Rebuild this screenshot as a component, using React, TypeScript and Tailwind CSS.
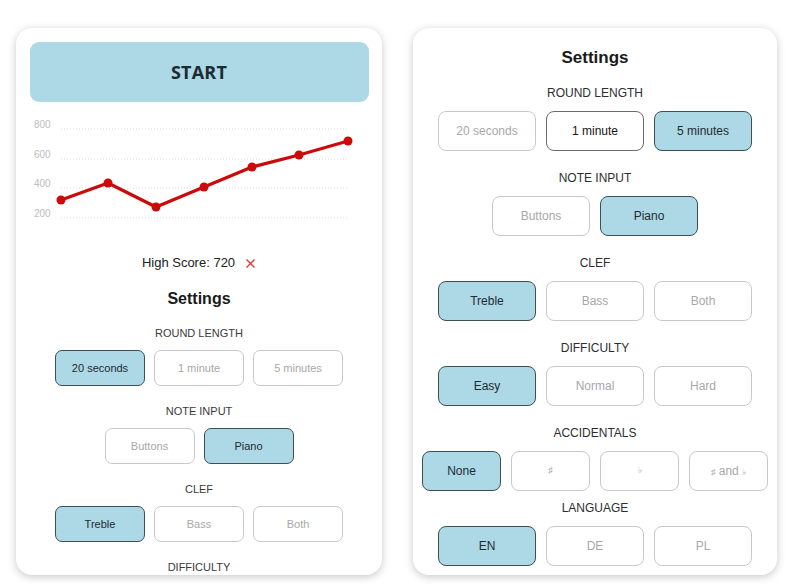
import React from 'react'

type Opt = { label: React.ReactNode; state?: 'on' | 'focus' | 'off' }

const font = { fontFamily: '"Liberation Sans", Arial, sans-serif' }

function OptButton({ opt, small, w }: { opt: Opt; small: boolean; w: string }) {
  const state = opt.state ?? 'off'
  const base = small
    ? 'h-[36px] rounded-[7px] text-[11px]'
    : 'h-[40px] rounded-[8px] text-[12px]'
  const look =
    state === 'on'
      ? 'bg-[#add8e6] border-[#3d4f55] text-[#1d2b30]'
      : state === 'focus'
        ? 'bg-white border-[#6b6b6b] text-[#151515]'
        : 'bg-white border-[#c9c9c9] text-[#a8a8a8]'
  return (
    <div className={`${base} ${w} ${look} flex items-center justify-center border`}>
      {opt.label}
    </div>
  )
}

function Section({
  title,
  opts,
  small,
  w,
  mt,
}: {
  title: string
  opts: Opt[]
  small: boolean
  w?: string
  mt: string
}) {
  return (
    <div className={`flex flex-col items-center ${mt}`}>
      <div
        className={
          small
            ? 'text-[11px] leading-[14px] text-[#3a3a3a]'
            : 'text-[12px] leading-[15px] text-[#2e2e2e]'
        }
      >
        {title}
      </div>
      {opts.length > 0 && (
        <div className={`flex justify-center mt-[10px] ${small ? 'gap-[9px]' : 'gap-[10px]'}`}>
          {opts.map((o, i) => (
            <OptButton key={i} opt={o} small={small} w={w ?? (small ? 'w-[90px]' : 'w-[98px]')} />
          ))}
        </div>
      )}
    </div>
  )
}

const pts: [number, number][] = [
  [31, 88],
  [78, 71],
  [126, 95],
  [174, 75],
  [222, 55],
  [269, 43],
  [318, 29],
]

function Chart() {
  const grid = [
    { y: 17, v: '800' },
    { y: 47, v: '600' },
    { y: 76, v: '400' },
    { y: 106, v: '200' },
  ]
  return (
    <svg width="339" height="120" className="mt-[10px] block" style={font}>
      {grid.map((g) => (
        <g key={g.v}>
          <line x1="31" x2="318" y1={g.y} y2={g.y} stroke="#dcdcdc" strokeWidth="1" strokeDasharray="1 2" />
          <text x="4" y={g.y - 1.5} fontSize="10" fill="#bdbdbd">
            {g.v}
          </text>
        </g>
      ))}
      <polyline
        points={pts.map((p) => p.join(',')).join(' ')}
        fill="none"
        stroke="#cc0a0a"
        strokeWidth="3.2"
        strokeLinejoin="round"
      />
      {pts.map((p, i) => (
        <circle key={i} cx={p[0]} cy={p[1]} r="4.5" fill="#cc0a0a" />
      ))}
    </svg>
  )
}

export default function App() {
  return (
    <div className="w-[788px] h-[584px] bg-white flex items-start gap-[31px] pl-[16px] pt-[28px]" style={font}>
      {/* left phone */}
      <div className="w-[366px] h-[547px] rounded-[16px] bg-white shadow-[0_2px_9px_rgba(0,0,0,0.22)] overflow-hidden">
        <div className="pt-[14px] px-[13px] flex flex-col items-center">
          <div className="w-[339px] h-[60px] rounded-[9px] bg-[#add8e6] flex items-center justify-center">
            <span
              className="text-[18px] font-bold text-[#1c2b33] tracking-[0.01em]"
              style={{ fontFamily: '"Open Sans", Arial, sans-serif' }}
            >
              START
            </span>
          </div>
          <Chart />
          <div className="mt-[23px] flex items-center gap-[10px] text-[13px] leading-[16px] text-[#222]">
            <span>High Score: 720</span>
            <svg width="11" height="11" viewBox="0 0 11 11">
              <path d="M1.5 1.5 L9.5 9.5 M9.5 1.5 L1.5 9.5" stroke="#d83a3a" strokeWidth="1.4" />
            </svg>
          </div>
          <div className="mt-[18px] text-[16px] leading-[20px] font-bold text-[#1a1a1a]">Settings</div>
        </div>
        <Section
          small
          mt="mt-[17px]"
          title="ROUND LENGTH"
          opts={[{ label: '20 seconds', state: 'on' }, { label: '1 minute' }, { label: '5 minutes' }]}
        />
        <Section
          small
          mt="mt-[18px]"
          title="NOTE INPUT"
          opts={[{ label: 'Buttons' }, { label: 'Piano', state: 'on' }]}
        />
        <Section
          small
          mt="mt-[18px]"
          title="CLEF"
          opts={[{ label: 'Treble', state: 'on' }, { label: 'Bass' }, { label: 'Both' }]}
        />
        <Section small mt="mt-[18px]" title="DIFFICULTY" opts={[]} />
      </div>

      {/* right phone */}
      <div className="w-[364px] h-[547px] rounded-[16px] bg-white shadow-[0_2px_9px_rgba(0,0,0,0.22)] overflow-hidden">
        <div className="pt-[20px] flex flex-col items-center">
          <div className="text-[17px] leading-[20px] font-bold text-[#1a1a1a]">Settings</div>
        </div>
        <Section
          small={false}
          mt="mt-[18px]"
          title="ROUND LENGTH"
          opts={[{ label: '20 seconds' }, { label: '1 minute', state: 'focus' }, { label: '5 minutes', state: 'on' }]}
        />
        <Section
          small={false}
          mt="mt-[20px]"
          title="NOTE INPUT"
          opts={[{ label: 'Buttons' }, { label: 'Piano', state: 'on' }]}
        />
        <Section
          small={false}
          mt="mt-[20px]"
          title="CLEF"
          opts={[{ label: 'Treble', state: 'on' }, { label: 'Bass' }, { label: 'Both' }]}
        />
        <Section
          small={false}
          mt="mt-[20px]"
          title="DIFFICULTY"
          opts={[{ label: 'Easy', state: 'on' }, { label: 'Normal' }, { label: 'Hard' }]}
        />
        <Section
          small={false}
          mt="mt-[20px]"
          title="ACCIDENTALS"
          w="w-[79px]"
          opts={[
            { label: 'None', state: 'on' },
            { label: <span className="text-[9px]">♯</span> },
            { label: <span className="text-[9px]">♭</span> },
            {
              label: (
                <span>
                  <span className="text-[9px]">♯</span> and <span className="text-[9px]">♭</span>
                </span>
              ),
            },
          ]}
        />
        <Section
          small={false}
          mt="mt-[10px]"
          title="LANGUAGE"
          opts={[{ label: 'EN', state: 'on' }, { label: 'DE' }, { label: 'PL' }]}
        />
      </div>
    </div>
  )
}
